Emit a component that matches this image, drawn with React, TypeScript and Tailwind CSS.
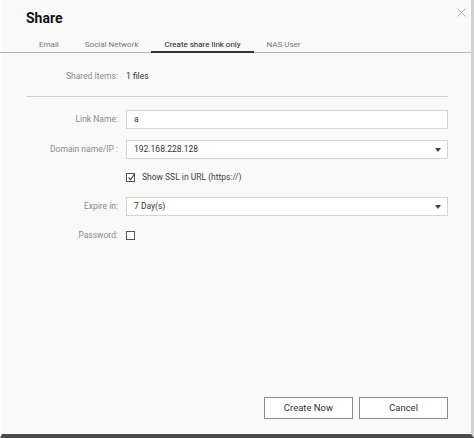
const tabs = ["Email", "Social Network", "Create share link only", "NAS User"];

function Label({ children }: { children: React.ReactNode }) {
  return (
    <div className="w-[92px] shrink-0 text-right text-[8.5px] text-[#8a8a8a] mr-[8px]">{children}</div>
  );
}

function Arrow() {
  return (
    <svg width="6" height="4" viewBox="0 0 6 4" className="ml-auto mr-[6px]">
      <path d="M0 0h6L3 4z" fill="#444" />
    </svg>
  );
}

function Checkbox({ checked }: { checked?: boolean }) {
  return (
    <div className="relative w-[9px] h-[9px] border border-[#555] bg-white">
      {checked && (
        <svg width="9" height="9" viewBox="0 0 9 9" className="absolute left-0 top-[-1px]">
          <path d="M1.5 4.5l2 2.2L7.5 1" fill="none" stroke="#333" strokeWidth="1.1" />
        </svg>
      )}
    </div>
  );
}

export default function App() {
  return (
    <div className="relative w-[474px] h-[438px] flex flex-col bg-[#f9f9f9] border-l-2 border-l-[#fdfdfd] border-r-[3px] border-r-[#d2d2d2] border-b-[4px] border-b-[#4b4b4b] font-['Roboto',sans-serif] -ml-0">
      {/* Header */}
      <div className="h-[37px] pl-[24px] pt-[10px]">
        <h1 className="text-[14px] leading-[17px] font-bold text-[#111]">Share</h1>
      </div>
      <button className="absolute right-[5px] top-[8px]">
        <svg width="9" height="9" viewBox="0 0 9 9">
          <path d="M0.5 0.5l8 8M8.5 0.5l-8 8" stroke="#aaa" strokeWidth="1" />
        </svg>
      </button>

      {/* Tabs */}
      <div className="flex h-[16px] border-b border-[#b5b5b5] -ml-[2px] pl-[26px]">
        {tabs.map((t, i) => (
          <div
            key={t}
            className={`relative px-[13px] text-[8px] leading-[15px] ${i === 2 ? "text-[#222]" : "text-[#777]"}`}
          >
            {t}
            {i === 2 && <div className="absolute left-0 right-0 -bottom-px h-[2px] bg-[#333]" />}
          </div>
        ))}
      </div>

      {/* Body */}
      <div className="flex flex-col flex-1 pl-[24px] pr-[23px]">
        <div className="flex items-center h-[19px] mt-[14px]">
          <Label>Shared Items:</Label>
          <span className="text-[8.5px] text-[#333]">1 files</span>
        </div>
        <div className="h-px bg-[#cfcfcf] mt-[10px]" />

        <div className="flex items-center h-[19px] mt-[13px]">
          <Label>Link Name:</Label>
          <div className="flex-1 h-full flex items-center border border-[#d4d4d4] bg-white pl-[7px] text-[8.5px] text-[#333]">a</div>
        </div>
        <div className="flex items-center h-[19px] mt-[11px]">
          <Label>Domain name/IP :</Label>
          <div className="flex-1 h-full flex items-center border border-[#d4d4d4] bg-white pl-[7px] text-[8.5px] text-[#333]">
            192.168.228.128
            <Arrow />
          </div>
        </div>
        <div className="flex items-center h-[19px] mt-[9px] pl-[100px] gap-[7px]">
          <Checkbox checked />
          <span className="text-[8.5px] text-[#444]">Show SSL in URL (https://)</span>
        </div>
        <div className="flex items-center h-[19px] mt-[10px]">
          <Label>Expire in:</Label>
          <div className="flex-1 h-full flex items-center border border-[#d4d4d4] bg-white pl-[7px] text-[8.5px] text-[#333]">
            7 Day(s)
            <Arrow />
          </div>
        </div>
        <div className="flex items-center h-[19px] mt-[10px]">
          <Label>Password:</Label>
          <Checkbox />
        </div>

        {/* Footer */}
        <div className="mt-auto mb-[15px] flex justify-end gap-[6px]">
          <button className="w-[89px] h-[22px] border border-[#8c8c8c] bg-white text-[9.5px] text-[#333]">Create Now</button>
          <button className="w-[89px] h-[22px] border border-[#8c8c8c] bg-white text-[9.5px] text-[#333]">Cancel</button>
        </div>
      </div>
    </div>
  );
}
